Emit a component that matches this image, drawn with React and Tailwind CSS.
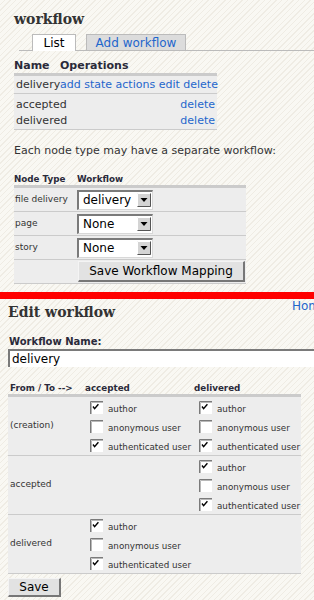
import React from 'react'

const stripes =
  'bg-[repeating-linear-gradient(135deg,#f9f8f3_0px,#f9f8f3_3px,#efece4_3px,#efece4_4px)]'

function Check({ on }) {
  return (
    <svg width="13" height="13" viewBox="0 0 13 13" className="shrink-0">
      <rect x="0" y="0" width="13" height="13" fill="#fff" />
      <path d="M0.5 13V0.5H13" stroke="#7a7a7a" strokeWidth="1" fill="none" />
      <path d="M1.5 13V1.5H13" stroke="#b8b8b8" strokeWidth="1" fill="none" />
      {on && <path d="M3 5.5L4.6 7.6L8.4 3.2" stroke="#000" strokeWidth="1.4" fill="none" />}
    </svg>
  )
}

function Perms({ items }) {
  return (
    <div className="flex flex-col pt-[1px] pl-[5px]">
      {items.map(([label, on]) => (
        <div key={label} className="h-[19px] flex items-center gap-[5px]">
          <Check on={on} />
          <span className="text-[8.75px] leading-[11px] whitespace-nowrap text-[#333] pt-[3px]">{label}</span>
        </div>
      ))}
    </div>
  )
}

function Select({ value }) {
  return (
    <div className="w-[76px] h-[20px] bg-white border-t-2 border-l-2 border-[#7a7a7a] border-r border-b border-r-[#d8d8d8] border-b-[#d8d8d8] flex items-center justify-between pl-[4px] pr-[1px]">
      <span className="text-[12px] text-black leading-none">{value}</span>
      <svg width="14" height="14" viewBox="0 0 14 14">
        <rect x="0" y="0" width="14" height="14" fill="#d4d4d4" />
        <path d="M0.5 13.5V0.5H13.5" stroke="#fff" fill="none" />
        <path d="M0.5 13.5H13.5V0.5" stroke="#555" fill="none" />
        <polygon points="3.5,5 10.5,5 7,9" fill="#000" />
      </svg>
    </div>
  )
}

const Link = ({ children, className = '' }) => (
  <span className={`text-[#1f66cc] ${className}`}>{children}</span>
)

const btn =
  'bg-[#e2e2e2] border-t border-l border-[#f4f4f4] border-r-2 border-b-2 border-r-[#777] border-b-[#777] text-[12px] text-black leading-none'

export default function App() {
  const roles = (a, b, c) => [
    ['author', a],
    ['anonymous user', b],
    ['authenticated user', c],
  ]

  return (
    <div className={`w-[314px] min-h-screen overflow-hidden font-['DejaVu_Sans',sans-serif] text-[#333] ${stripes}`}>
      {/* workflow list */}
      <div className="pl-[14px] pt-[9px]">
        <h1 className="font-['DejaVu_Serif',serif] font-bold text-[14px] leading-[20px] text-[#333]">workflow</h1>
        <div className="ml-[5px] mt-[5px] h-[17px] border-b border-[#bbb] flex items-end gap-[10px] pl-[13px]">
          <div className="w-[44px] h-[17px] -mb-[1px] bg-white border border-b-0 border-[#bbb] text-[12px] leading-none text-black flex items-center justify-center">List</div>
          <div className="w-[100px] h-[16px] bg-[#dcdcdc] border border-b-0 border-[#bbb] text-[12px] leading-none flex items-center justify-center">
            <Link>Add workflow</Link>
          </div>
        </div>

        <div className="mt-[7px] w-[203px] text-[11px] leading-[13px]">
          <div className="h-[18px] flex items-center border-b-[3px] border-[#cbcbcb] font-bold text-[11px] text-[#2a2a3a]">
            <span className="w-[46px]">Name</span>
            <span>Operations</span>
          </div>
          <div className="bg-[#ededed]">
            <div className="h-[18px] flex items-center border-b border-[#cbcbcb] whitespace-nowrap">
              <span className="w-[46px] pl-[2px]">delivery</span>
              <span className="flex-1 text-right pr-[2px]">
                <Link>add state</Link> <Link>actions</Link> <Link>edit</Link> <Link>delete</Link>
              </span>
            </div>
            <div className="h-[17px] flex items-end justify-between px-[2px]">
              <span>accepted</span>
              <Link>delete</Link>
            </div>
            <div className="h-[19px] flex items-center justify-between px-[2px] border-b border-[#cbcbcb]">
              <span>delivered</span>
              <Link>delete</Link>
            </div>
          </div>
        </div>

        <p className="mt-[14px] text-[11px] leading-[14px]">Each node type may have a separate workflow:</p>

        <div className="mt-[13px] w-[232px]">
          <div className="h-[17px] flex pt-[2px] border-b-[3px] border-[#cbcbcb] font-bold text-[8.75px] leading-[12px] text-[#2a2a3a]">
            <span className="w-[63px]">Node Type</span>
            <span>Workflow</span>
          </div>
          <div className="bg-[#ededed] text-[9px]">
            {[
              ['file delivery', 'delivery'],
              ['page', 'None'],
              ['story', 'None'],
            ].map(([type, wf]) => (
              <div key={type} className="h-[24px] flex items-center border-b border-[#cbcbcb]">
                <span className="w-[63px] pl-[1px]">{type}</span>
                <Select value={wf} />
              </div>
            ))}
            <div className="h-[24px] flex items-center border-b border-[#cbcbcb] pl-[64px]">
              <button className={`w-[167px] h-[21px] ${btn}`}>Save Workflow Mapping</button>
            </div>
          </div>
        </div>
      </div>

      <div className="mt-[8px] h-[7px] bg-[#ff0000]" />

      {/* edit workflow */}
      <div className="pl-[8px]">
        <div className="flex items-start overflow-hidden">
          <h1 className="w-[284px] shrink-0 pt-[3px] font-['DejaVu_Serif',serif] font-bold text-[14px] leading-[20px] text-[#333]">Edit workflow</h1>
          <Link className="shrink-0 text-[12px] leading-[14px]">Home</Link>
        </div>

        <div className="mt-[13px] font-bold text-[10px] leading-[13px] text-[#2a2a3a] pl-[1px]">Workflow Name:</div>
        <div className="mt-[1px] w-[320px] h-[18px] bg-white border-t-2 border-l-2 border-[#7a7a7a] flex items-center pl-[2px] text-[12px] leading-none text-black">
          delivery
        </div>

        <div className="mt-[13px] w-[293px]">
          <div className="h-[17px] grid grid-cols-[77px_109px_1fr] pt-[2px] border-b-[3px] border-[#cbcbcb] font-bold text-[8.75px] leading-[12px] text-[#2a2a3a]">
            <span className="pl-[2px]">From / To --&gt;</span>
            <span>accepted</span>
            <span>delivered</span>
          </div>
          <div className="bg-[#ededed] text-[9px]">
            <div className="grid grid-cols-[77px_109px_1fr] items-center border-b border-[#cbcbcb]">
              <span className="pl-[2px]">(creation)</span>
              <Perms items={roles(true, false, true)} />
              <Perms items={roles(true, false, true)} />
            </div>
            <div className="grid grid-cols-[77px_109px_1fr] items-center border-b border-[#cbcbcb]">
              <span className="pl-[2px]">accepted</span>
              <span />
              <Perms items={roles(true, false, true)} />
            </div>
            <div className="grid grid-cols-[77px_109px_1fr] items-center border-b border-[#cbcbcb]">
              <span className="pl-[2px]">delivered</span>
              <Perms items={roles(true, false, true)} />
              <span />
            </div>
          </div>
        </div>

        <button className={`mt-[2px] w-[53px] h-[19px] ${btn}`}>Save</button>
      </div>
    </div>
  )
}
